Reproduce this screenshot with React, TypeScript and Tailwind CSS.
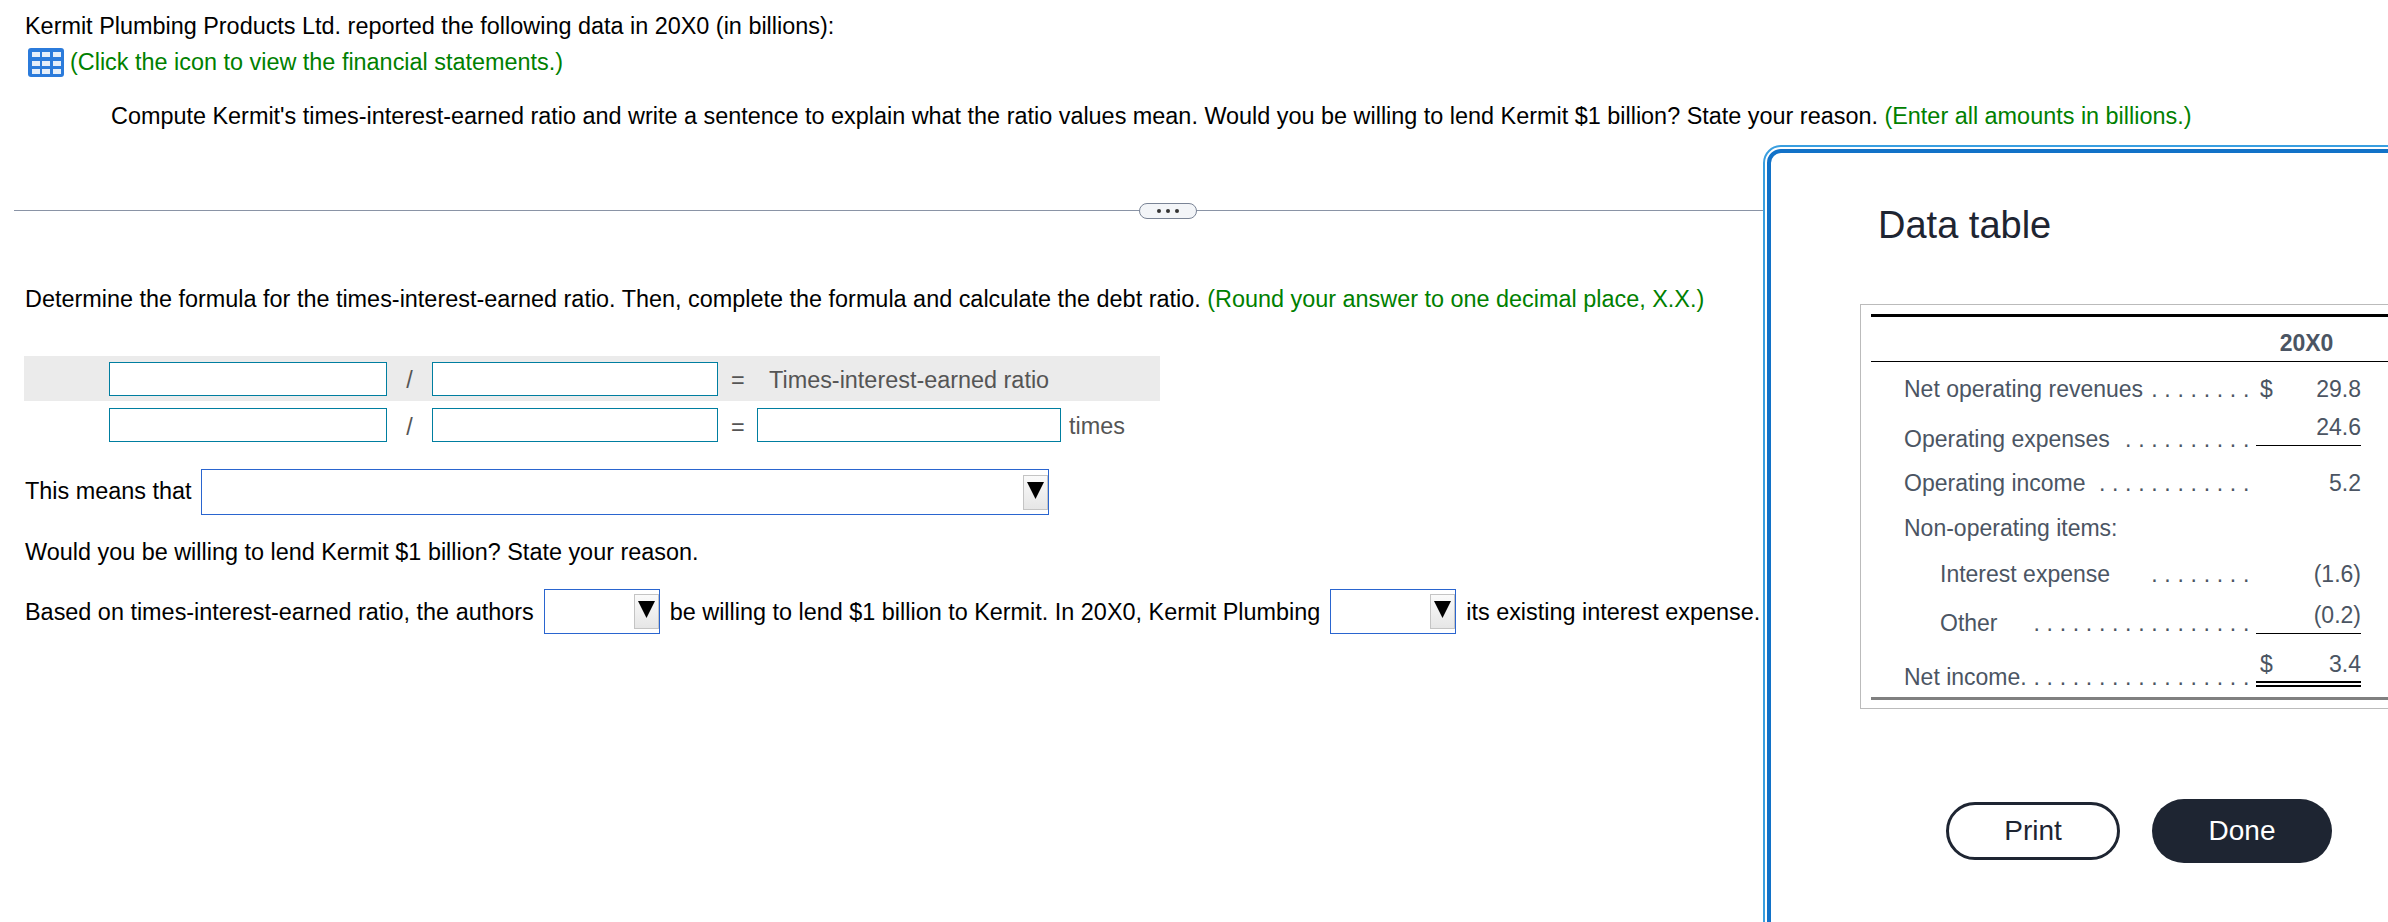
const ROWS = [
  { label: 'Net operating revenues', dots: '........', mt: 'mt-[12px]', labelPt: 'pt-0', sign: '$', value: '29.8', line: '' },
  { label: 'Operating expenses', dots: '..........', mt: 'mt-[8px]', labelPt: 'pt-[12px]', sign: '', value: '24.6', line: 'border-b border-black h-[34px]' },
  { label: 'Operating income', dots: '............', mt: 'mt-[14px]', labelPt: 'pt-0', sign: '', value: '5.2', line: '' },
  { label: 'Non-operating items:', dots: '', mt: 'mt-[15px]', labelPt: 'pt-0', sign: '', value: '', line: '' },
  { label: 'Interest expense', dots: '........', mt: 'mt-[16px]', labelPt: 'pt-0', sign: '', value: '(1.6)', line: '', indent: true },
  { label: 'Other', dots: '.................', mt: 'mt-[11px]', labelPt: 'pt-[8px]', sign: '', value: '(0.2)', line: 'border-b border-black h-[34px]', indent: true },
  { label: 'Net income.', dots: '.................', mt: 'mt-[11px]', labelPt: 'pt-[13px]', sign: '$', value: '3.4', line: 'h-[38px] border-b-[6px] border-double border-black' },
];

function Blank({ w }: { w: string }) {
  return <div className={`${w} h-[34px] shrink-0 border border-[#007ea0] bg-white`} />;
}

function Slash() {
  return <span className="w-[45px] shrink-0 pt-[3px] text-center text-[#555]">/</span>;
}

function Drop({ w, h }: { w: string; h: string }) {
  return (
    <div className={`${w} ${h} shrink-0 flex items-center justify-end border border-[#2a65cf] bg-white`}>
      <div className="h-[35px] w-[25px] flex items-start justify-center pt-[6px] border border-[#c4c4c4] bg-gradient-to-b from-[#fafafa] to-[#e6e6e6]">
        <svg width="17" height="17" viewBox="0 0 17 17">
          <polygon points="0,0 17,0 8.5,17" fill="#000" />
        </svg>
      </div>
    </div>
  );
}

function TableIcon() {
  return (
    <svg width="36" height="29" viewBox="0 0 36 29" className="shrink-0">
      <rect width="36" height="29" rx="3" fill="#2b7bdb" />
      {[4, 13, 21].map((y) =>
        [4, 14, 25].map((x) => <rect key={`${x}-${y}`} x={x} y={y} width="8" height="5" fill="#e6effa" />),
      )}
    </svg>
  );
}

export default function App() {
  return (
    <div className="relative h-[922px] w-[2388px] overflow-hidden bg-white text-[23.42px] leading-[30px] text-black font-['Liberation_Sans',Arial,sans-serif]">
      <div className="pt-[11px]">
        <p className="pl-[25px]">Kermit Plumbing Products Ltd. reported the following data in 20X0 (in billions):</p>
        <div className="mt-[6px] pl-[28px] flex items-center gap-[6px] text-[#008000]">
          <TableIcon />
          <span>(Click the icon to view the financial statements.)</span>
        </div>
        <p className="mt-[24px] pl-[111px]">
          Compute Kermit's times-interest-earned ratio and write a sentence to explain what the ratio values mean. Would you be willing to lend Kermit $1 billion? State your reason.{' '}
          <span className="text-[#008000]">(Enter all amounts in billions.)</span>
        </p>

        <div className="relative mt-[79px] ml-[14px] mr-[623px] h-px bg-[#8a94a6]">
          <div className="absolute left-[1125px] top-[-7px] h-[16px] w-[58px] flex items-center justify-center gap-[5px] rounded-full border border-[#7a8496] bg-[#f3f5f8]">
            <span className="h-[4px] w-[4px] rounded-full bg-[#333]" />
            <span className="h-[4px] w-[4px] rounded-full bg-[#333]" />
            <span className="h-[4px] w-[4px] rounded-full bg-[#333]" />
          </div>
        </div>

        <p className="mt-[73px] pl-[25px]">
          Determine the formula for the times-interest-earned ratio. Then, complete the formula and calculate the debt ratio.{' '}
          <span className="text-[#008000]">(Round your answer to one decimal place, X.X.)</span>
        </p>

        <div className="mt-[42px] ml-[24px] w-[1136px] h-[45px] pl-[85px] flex items-center bg-[#ebebeb] text-[#555]">
          <Blank w="w-[278px]" />
          <Slash />
          <Blank w="w-[286px]" />
          <span className="w-[52px] shrink-0 pl-[13px] pt-[3px] text-left">=</span>
          <span className="pt-[3px] -ml-px">Times-interest-earned ratio</span>
        </div>
        <div className="mt-[7px] ml-[109px] h-[34px] flex items-center text-[#555]">
          <Blank w="w-[278px]" />
          <Slash />
          <Blank w="w-[286px]" />
          <span className="w-[39px] shrink-0 pl-[13px] pt-[3px] text-left">=</span>
          <Blank w="w-[304px]" />
          <span className="ml-[8px] pt-[2px]">times</span>
        </div>

        <div className="mt-[27px] pl-[25px] flex items-center gap-[9px]">
          <span className="-mt-[2px]">This means that</span>
          <Drop w="w-[848px]" h="h-[46px]" />
        </div>
        <p className="mt-[22px] pl-[25px]">Would you be willing to lend Kermit $1 billion? State your reason.</p>
        <div className="mt-[22px] pl-[25px] flex items-center whitespace-nowrap">
          <span>Based on times-interest-earned ratio, the authors</span>
          <div className="ml-[10px]"><Drop w="w-[116px]" h="h-[45px]" /></div>
          <span className="ml-[10px]">be willing to lend $1 billion to Kermit. In 20X0, Kermit Plumbing</span>
          <div className="ml-[10px]"><Drop w="w-[126px]" h="h-[45px]" /></div>
          <span className="ml-[10px]">its existing interest expense.</span>
        </div>
      </div>

      {/* data table window, runs off the page */}
      <div className="absolute left-[1763px] top-[145px] h-[900px] w-[800px] rounded-tl-[18px] border-2 border-[#3a9fe0] bg-white p-[2px]">
        <div className="h-full rounded-tl-[14px] border-[4px] border-[#1272c8] pt-[49px] pl-[107px]">
          <h2 className="text-[38px] leading-[46px] text-[#1e2532]">Data table</h2>

          <div className="mt-[56px] -ml-[18px] w-[700px] h-[405px] border border-[#bbb] pl-[10px] pt-[9px] text-[23px] leading-[30px] text-[#4b5563]">
            <div className="h-[3px] bg-black" />
            <div className="h-[45px] border-b border-black pl-[383px]">
              <div className="w-[105px] pt-[11px] text-center font-bold">20X0</div>
            </div>
            {ROWS.map((r) => (
              <div key={r.label} className={`${r.mt} flex items-start`}>
                <div className={`${r.labelPt} ${r.indent ? 'pl-[69px]' : 'pl-[33px]'} w-[379px] shrink-0 flex justify-between whitespace-nowrap`}>
                  <span>{r.label}</span>
                  <span className="tracking-[6.7px] mr-[-6px]">{r.dots}</span>
                </div>
                <div className={`${r.line} ml-[6px] w-[105px] flex justify-between pl-[4px]`}>
                  <span>{r.sign}</span>
                  <span>{r.value}</span>
                </div>
              </div>
            ))}
            <div className="mt-[5px] h-[3px] bg-[#808080]" />
          </div>

          <div className="mt-[90px] ml-[68px] flex items-center gap-[32px] text-[28px]">
            <button className="h-[58px] w-[174px] rounded-full border-[3px] border-[#1e2532] bg-white text-[#1e2532]">Print</button>
            <button className="h-[64px] w-[180px] rounded-full bg-[#1e2532] text-white">Done</button>
          </div>
        </div>
      </div>
    </div>
  );
}
